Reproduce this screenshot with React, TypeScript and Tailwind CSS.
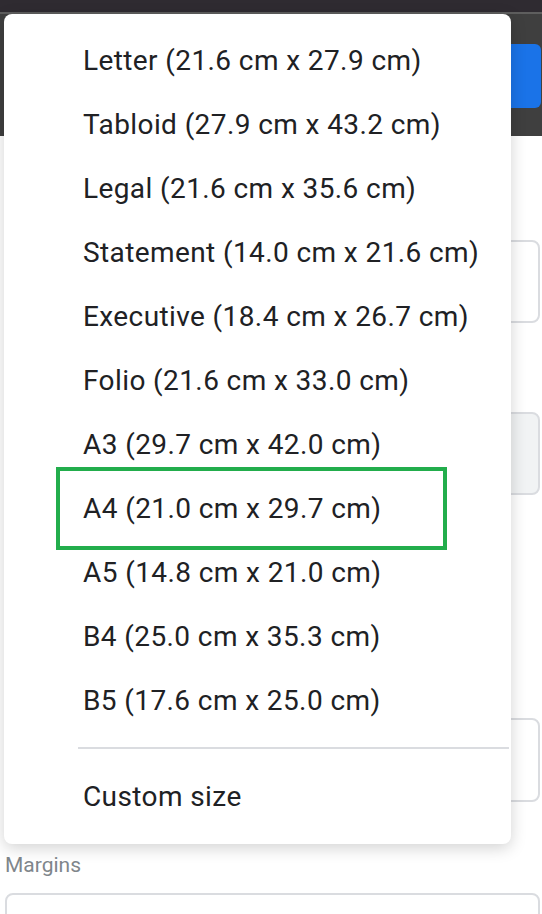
const sizes = [
  "Letter (21.6 cm x 27.9 cm)",
  "Tabloid (27.9 cm x 43.2 cm)",
  "Legal (21.6 cm x 35.6 cm)",
  "Statement (14.0 cm x 21.6 cm)",
  "Executive (18.4 cm x 26.7 cm)",
  "Folio (21.6 cm x 33.0 cm)",
  "A3 (29.7 cm x 42.0 cm)",
  "A4 (21.0 cm x 29.7 cm)",
  "A5 (14.8 cm x 21.0 cm)",
  "B4 (25.0 cm x 35.3 cm)",
  "B5 (17.6 cm x 25.0 cm)",
];

const App = () => (
  <div className="relative h-[914px] w-full overflow-hidden bg-white font-['Roboto',sans-serif]">
    {/* page behind the menu */}
    <div className="h-[12px] bg-[#2f2b31]" />
    <div className="h-[2px] bg-[#5e5e5e]" />
    <div className="flex h-[122px] items-start justify-end bg-[#3f3f3f] pt-[30px]">
      <div className="mr-[1px] h-[64px] w-[120px] rounded-md bg-[#1a73e8]" />
    </div>

    <div className="flex flex-col px-[5px] pr-[2px]">
      <div className="mt-[104px] h-[83px] rounded-lg border-2 border-[#dadce0] bg-white" />
      <div className="mt-[89px] h-[83px] rounded-lg border-2 border-[#dadce0] bg-[#f1f3f4]" />
      <div className="mt-[223px] h-[84px] rounded-lg border-2 border-[#dadce0] bg-white" />
      <div className="mt-[50px] text-[21px] leading-[26px] text-[#80868b]">Margins</div>
      <div className="mt-[15px] h-[84px] rounded-lg border-2 border-[#dadce0] bg-white" />
    </div>

    {/* paper size menu */}
    <div className="absolute left-[4px] top-[14px] w-[507px] rounded-lg bg-white py-[15px] shadow-[0_4px_16px_rgba(0,0,0,0.18)]">
      {sizes.map((s) => (
        <div key={s} className="flex h-[64px] items-center pl-[79px] text-[28px] tracking-[0.4px] text-[#202124]">
          {s}
        </div>
      ))}
      <div className="ml-[74px] mr-[2px] mt-[14px] mb-[16px] h-[2px] bg-[#dadce0]" />
      <div className="flex h-[64px] items-center pl-[79px] text-[28px] tracking-[0.4px] text-[#202124]">Custom size</div>

      <div className="absolute left-[52px] top-[453px] h-[83px] w-[391px] border-[4px] border-[#22ad4c]" />
    </div>
  </div>
);

export default App;
